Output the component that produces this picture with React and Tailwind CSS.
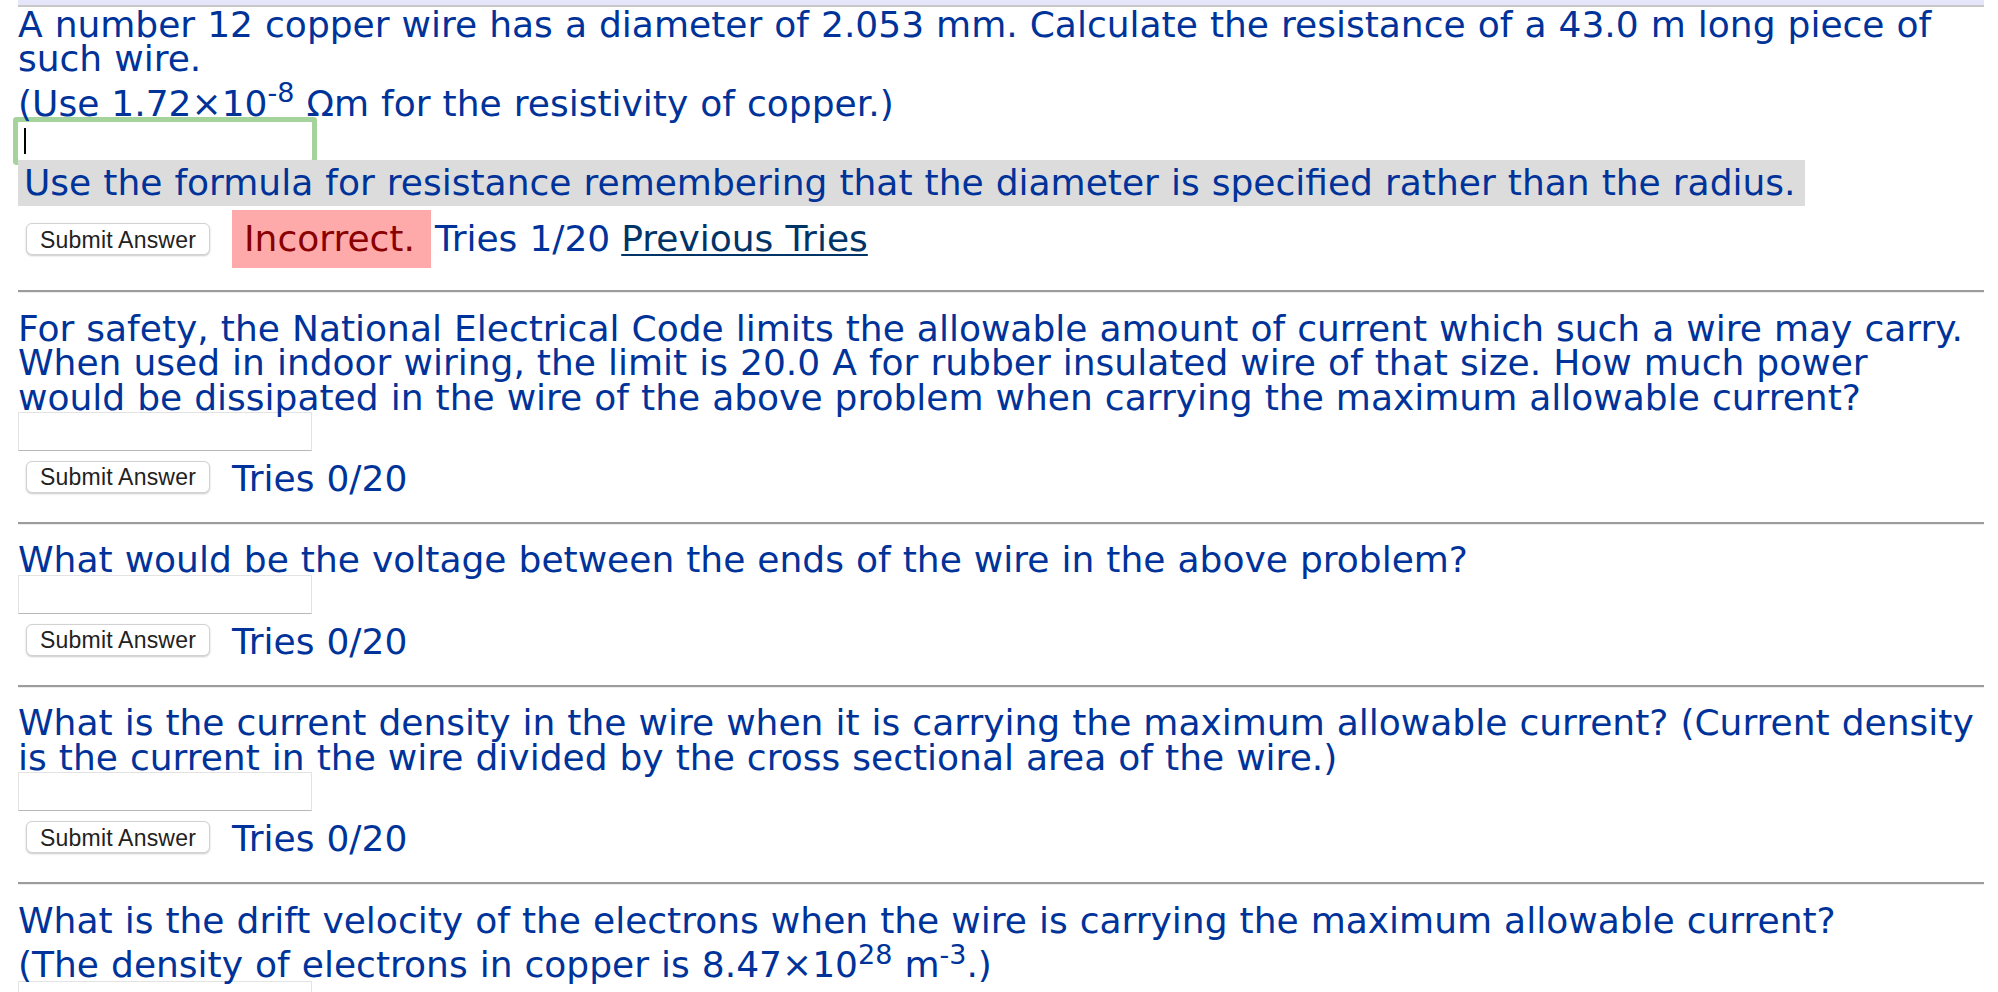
import React from 'react';

const SubmitButton = () => (
  <button className="ml-[8px] flex h-[32px] w-[184px] shrink-0 items-center justify-center rounded-[6px] border border-[#d2d2d2] bg-white pt-[2px] font-['Liberation_Sans',Arial,sans-serif] text-[23px] leading-none tracking-[0.2px] text-[#222] shadow-[0_1px_2px_rgba(0,0,0,0.22)] [word-spacing:0px]">
    Submit Answer
  </button>
);

const AnswerBox = ({ className = '' }) => (
  <div className={'h-[39px] w-[294px] border border-[#e3e3e3] border-b-[#b8b8b8] bg-white ' + className} />
);

const Rule = ({ className = '' }) => (
  <div className={'h-[3px] border-t-2 border-b border-t-[#9c9c9c] border-b-[#ececec] ' + className} />
);

const TriesRow = () => (
  <div className="mt-[10px] flex h-[35px] items-start">
    <SubmitButton />
    <span className="ml-[22px] whitespace-nowrap leading-[35px]">Tries 0/20</span>
  </div>
);

const Question = ({ lines, last }) => (
  <>
    <div className="mt-[18.5px] leading-[34.4px]">
      {lines.map((l) => (
        <div key={l} className="whitespace-nowrap">{l}</div>
      ))}
    </div>
    <AnswerBox className="mt-[-3px]" />
    <TriesRow />
    {!last && <Rule className="mt-[26px]" />}
  </>
);

const App = () => {
  return (
    <div className="h-[992px] overflow-hidden bg-white">
      <div className="ml-[18px] mr-[14px] font-['DejaVu_Sans',Verdana,sans-serif] text-[36px] text-[#003399] [word-spacing:0.6px]">
        <div className="h-[5px] bg-[#e6e6fa]" />
        <div className="h-[2px] bg-[#c8c8c8]" />

        <div className="mt-[1px] leading-[34.4px]">
          <div className="whitespace-nowrap">
            A number 12 copper wire has a diameter of 2.053 mm. Calculate the resistance of a 43.0 m long piece of
          </div>
          <div>such wire.</div>
        </div>
        <div className="mt-[10px] whitespace-nowrap leading-[34.4px]">
          (Use 1.72×10<sup>-8</sup> Ωm for the resistivity of copper.)
        </div>
        <div className="mt-[1px] flex h-[38px] w-[294px] items-center rounded-[1px] bg-white pl-[6px] shadow-[0_0_0_5px_#a4d49c]">
          <span className="h-[26px] w-[2px] bg-black" />
        </div>
        <div className="w-fit whitespace-nowrap bg-[#dcdcdc] pl-[6px] pr-[9px] leading-[46px]">
          Use the formula for resistance remembering that the diameter is specified rather than the radius.
        </div>
        <div className="mt-[4px] flex h-[58px] items-center">
          <SubmitButton />
          <span className="ml-[22px] bg-[#ffaaaa] pl-[12px] pr-[16px] leading-[58px] text-[#880000]">Incorrect.</span>
          <span className="ml-[4px] whitespace-nowrap leading-[58px]">Tries 1/20</span>
          <a href="#" className="ml-[11px] whitespace-nowrap leading-[58px] text-[#003366] underline decoration-[2px] underline-offset-[3px]">
            Previous Tries
          </a>
        </div>
        <Rule className="mt-[22px]" />

        <Question
          lines={[
            'For safety, the National Electrical Code limits the allowable amount of current which such a wire may carry.',
            'When used in indoor wiring, the limit is 20.0 A for rubber insulated wire of that size. How much power',
            'would be dissipated in the wire of the above problem when carrying the maximum allowable current?',
          ]}
        />
        <Question lines={['What would be the voltage between the ends of the wire in the above problem?']} />
        <Question
          lines={[
            'What is the current density in the wire when it is carrying the maximum allowable current? (Current density',
            'is the current in the wire divided by the cross sectional area of the wire.)',
          ]}
        />

        <div className="mt-[18.5px] leading-[34.4px]">
          <div className="whitespace-nowrap">
            What is the drift velocity of the electrons when the wire is carrying the maximum allowable current?
          </div>
          <div className="mt-[10px] whitespace-nowrap">
            (The density of electrons in copper is 8.47×10<sup>28</sup> m<sup>-3</sup>.)
          </div>
        </div>
        <AnswerBox className="mt-[-1px]" />
        <TriesRow />
      </div>
    </div>
  );
};

export default App;
